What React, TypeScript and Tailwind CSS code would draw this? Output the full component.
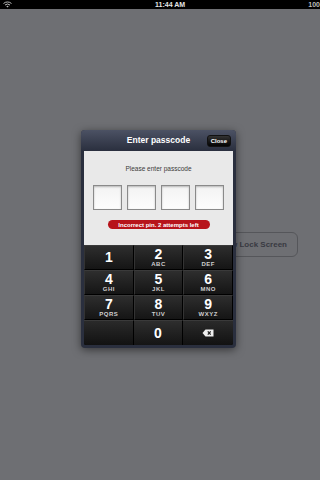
import React from "react";

const keys = [
  { n: "1", l: "" },
  { n: "2", l: "ABC" },
  { n: "3", l: "DEF" },
  { n: "4", l: "GHI" },
  { n: "5", l: "JKL" },
  { n: "6", l: "MNO" },
  { n: "7", l: "PQRS" },
  { n: "8", l: "TUV" },
  { n: "9", l: "WXYZ" },
];

function Key({ n, l }: { n: string; l: string }) {
  return (
    <div className="h-[25px] flex flex-col items-center justify-center bg-gradient-to-b from-[#2e2e2e] to-[#151515] border-t border-t-[#3a3a3a] border-b border-b-black border-r border-r-black border-l border-l-[#333] leading-none">
      <span className="text-[14px] font-bold text-white leading-[13px]">{n}</span>
      {l && <span className="text-[6px] font-bold text-[#cfcfcf] tracking-[0.5px] leading-[7px]">{l}</span>}
    </div>
  );
}

export default function App() {
  return (
    <div className="relative w-[320px] h-[480px] bg-[#6e6f73] overflow-hidden" style={{ fontFamily: '"Liberation Sans", Arial, sans-serif' }}>
      {/* status bar */}
      <div className="h-[9px] bg-black flex items-center justify-between px-[3px] text-[7px] font-bold text-[#e6e6e6] leading-none">
        <svg width="9" height="7" viewBox="0 0 9 7">
          <path d="M0.5 2.5 A6 6 0 0 1 8.5 2.5" stroke="#bbb" strokeWidth="1" fill="none" />
          <path d="M2 4 A4 4 0 0 1 7 4" stroke="#bbb" strokeWidth="1" fill="none" />
          <path d="M4.5 6.5 L3.3 5.2 A1.8 1.8 0 0 1 5.7 5.2 Z" fill="#bbb" />
        </svg>
        <span className="ml-[20px]">11:44 AM</span>
        <span className="text-[#bbb] -mr-[3px]">100</span>
      </div>

      {/* background content */}
      <div className="h-[471px] flex items-center justify-end pr-[22px]">
        <div className="w-[95px] h-[25px] rounded-[6px] border border-[#55565a] flex items-center justify-end pr-[10px] text-[8px] font-bold text-[#393a42]">
          Show Lock Screen
        </div>
      </div>

      {/* passcode popup */}
      <div className="absolute left-[81px] top-[130px] w-[155px] rounded-[4px] bg-[#2a2f3e] p-[3px] pt-0 shadow-[0_2px_8px_rgba(0,0,0,0.5)]">
        <div className="h-[21px] flex items-center justify-center relative bg-gradient-to-b from-[#4c5264] to-[#2a2f3e] -mx-[3px] px-[3px] rounded-t-[4px]">
          <span className="text-[8.5px] font-bold text-white">Enter passcode</span>
          <div className="absolute right-[5px] top-[5px] h-[12px] px-[3px] rounded-[3px] bg-gradient-to-b from-[#333] to-[#050505] border border-[#111] flex items-center text-[6px] font-bold text-white">
            Close
          </div>
        </div>
        <div className="bg-[#e9e9e9] flex flex-col items-center pt-[14px] pb-[16px]">
          <span className="text-[6.5px] text-[#3a3a3a] leading-[8px]">Please enter passcode</span>
          <div className="flex gap-[5px] mt-[12px]">
            {[0, 1, 2, 3].map((i) => (
              <div key={i} className="w-[29px] h-[25px] bg-gradient-to-b from-[#f3f3f3] to-[#fdfdfd] border border-[#8a8a8a] shadow-[inset_0_1px_2px_rgba(0,0,0,0.25)]" />
            ))}
          </div>
          <div className="mt-[10px] w-[102px] h-[9px] rounded-full bg-[#b7141b] flex items-center justify-center text-[6px] font-bold text-white leading-none">
            Incorrect pin. 2 attempts left
          </div>
        </div>
        <div className="grid grid-cols-3 bg-black rounded-b-[2px] overflow-hidden">
          {keys.map((k) => (
            <Key key={k.n} n={k.n} l={k.l} />
          ))}
          <div className="h-[25px] bg-gradient-to-b from-[#2a2a2a] to-[#121212] border-t border-t-[#3a3a3a] border-r border-r-black" />
          <div className="h-[25px] flex items-center justify-center bg-gradient-to-b from-[#2e2e2e] to-[#151515] border-t border-t-[#3a3a3a] border-r border-r-black">
            <span className="text-[14px] font-bold text-white">0</span>
          </div>
          <div className="h-[25px] flex items-center justify-center bg-gradient-to-b from-[#2a2a2a] to-[#121212] border-t border-t-[#3a3a3a]">
            <svg width="12" height="8" viewBox="0 0 12 8">
              <path d="M3.5 0.5 H11.5 V7.5 H3.5 L0.5 4 Z" fill="#eee" />
              <path d="M5.8 2.3 L8.7 5.7 M8.7 2.3 L5.8 5.7" stroke="#222" strokeWidth="1.3" />
            </svg>
          </div>
        </div>
      </div>
    </div>
  );
}
